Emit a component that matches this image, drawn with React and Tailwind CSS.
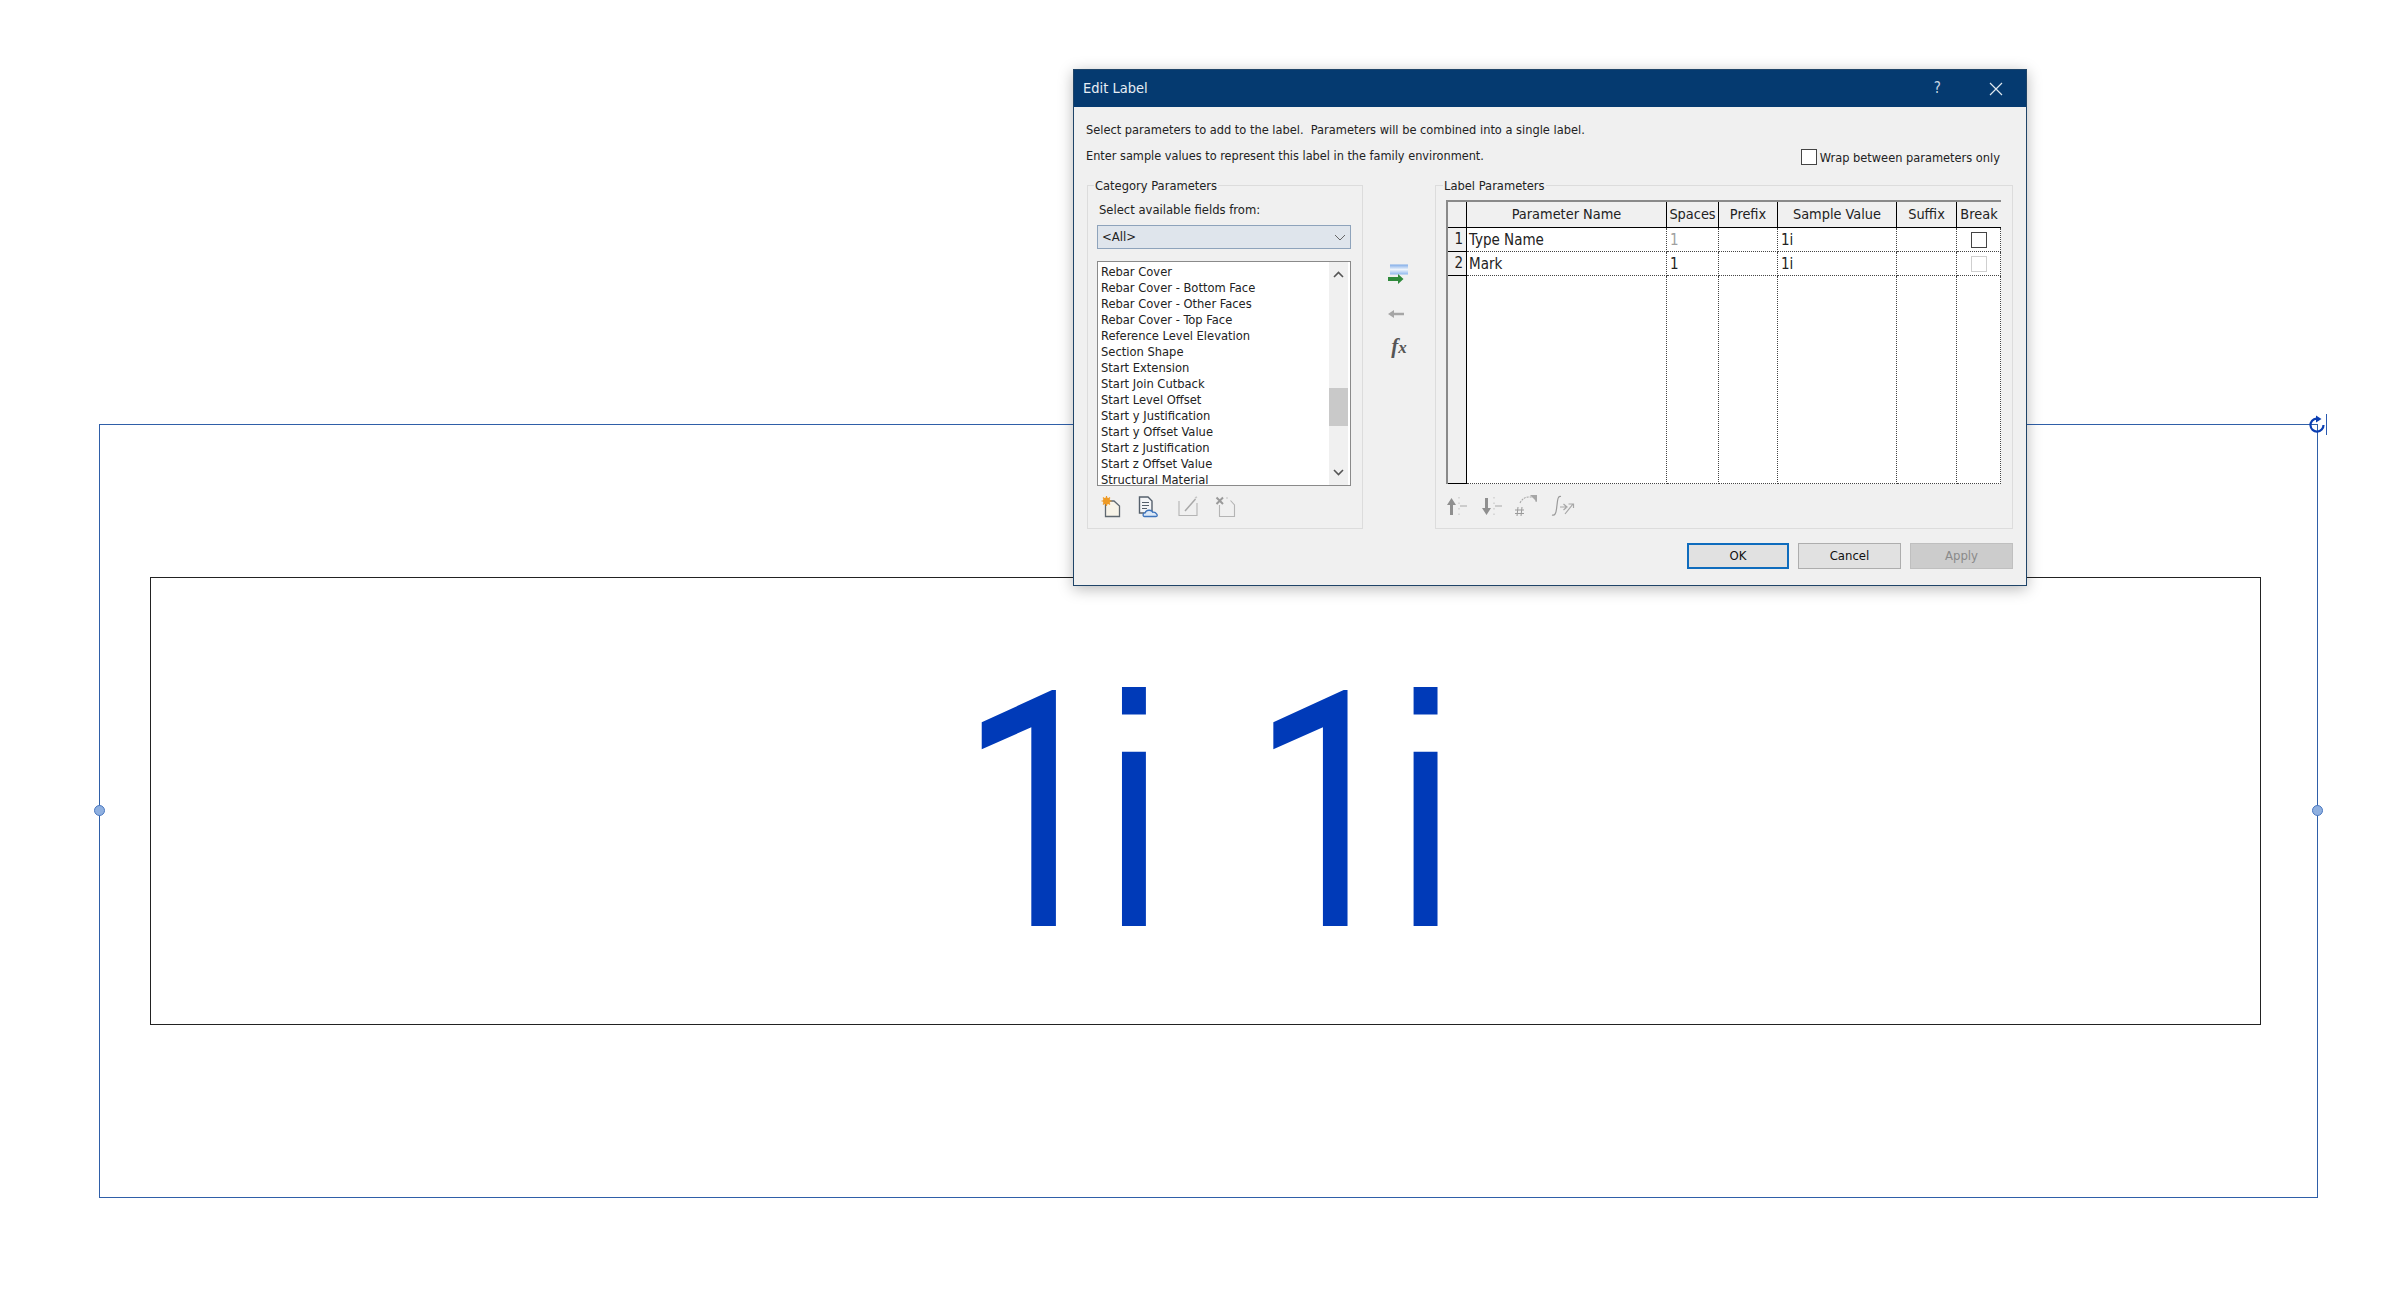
import React from "react";

const FONT = "font-['DejaVu_Sans_Condensed','Noto_Sans',sans-serif]";

const listItems = [
  "Rebar Cover",
  "Rebar Cover - Bottom Face",
  "Rebar Cover - Other Faces",
  "Rebar Cover - Top Face",
  "Reference Level Elevation",
  "Section Shape",
  "Start Extension",
  "Start Join Cutback",
  "Start Level Offset",
  "Start y Justification",
  "Start y Offset Value",
  "Start z Justification",
  "Start z Offset Value",
  "Structural Material",
];

const headers = ["", "Parameter Name", "Spaces", "Prefix", "Sample Value", "Suffix", "Break"];

function Handle() {
  return <div className="h-[11px] w-[11px] rounded-full border border-[#4a78c0] bg-[#8fb0e0]" />;
}

function RotateHandle() {
  return (
    <svg width="20" height="22" viewBox="0 0 20 22" fill="none">
      <path d="M9.5 4.6 A6.5 6.5 0 1 0 16.5 11" stroke="#0b3fb3" strokeWidth="2.2" />
      <path d="M9 1.5 L14.5 5 L9 8.5 Z" fill="#0b3fb3" />
    </svg>
  );
}

function NewIcon() {
  return (
    <svg width="22" height="22" viewBox="0 0 22 22" fill="none">
      <path d="M4.5 5 H13 L18.5 10 V20.5 H4.5 Z" fill="#f7f3e8" stroke="#5f6870" strokeWidth="1.3" />
      <circle cx="5.5" cy="5" r="3.6" fill="#ee9a25" />
      <path d="M5.5 0 V10 M0.5 5 H10.5 M2 1.5 L9 8.5 M9 1.5 L2 8.5" stroke="#ee9a25" strokeWidth="1.2" />
    </svg>
  );
}

function CloudDocIcon() {
  return (
    <svg width="22" height="22" viewBox="0 0 22 22" fill="none">
      <path d="M1.5 1 H10 L14 5 V17 H1.5 Z" fill="#f4f5f7" stroke="#55606c" strokeWidth="1.4" />
      <path d="M4 6.5 H11 M4 9.5 H11 M4 12.5 H9" stroke="#55606c" strokeWidth="1.2" />
      <path d="M6.5 20.5 C4.5 20.5 4.5 16.8 7.2 16.8 C8 13.8 13.5 13.2 14.8 16.3 C18 15.5 21 20.5 18 20.5 Z" fill="#dbe8f7" stroke="#3d74bd" strokeWidth="1.3" />
    </svg>
  );
}

function EditIcon() {
  return (
    <svg width="22" height="22" viewBox="0 0 22 22" fill="none">
      <path d="M2 5 V19.5 H20 V7" stroke="#b4b4b4" strokeWidth="1.1" />
      <path d="M8 15 L18.5 3" stroke="#a8a8a8" strokeWidth="1.5" />
      <path d="M18 2 L20 1" stroke="#c8c8c8" strokeWidth="1.5" />
    </svg>
  );
}

function DeleteIcon() {
  return (
    <svg width="22" height="22" viewBox="0 0 22 22" fill="none">
      <path d="M4.5 9 V20.5 H19.5 V9 L15.5 4.5" stroke="#b4b4b4" strokeWidth="1.1" />
      <path d="M1.5 1.5 L8 8 M8 1.5 L1.5 8" stroke="#9a9a9a" strokeWidth="2" />
      <path d="M11 2 H13" stroke="#c4c4c4" strokeWidth="1" />
    </svg>
  );
}

function AddParamIcon() {
  return (
    <svg width="22" height="20" viewBox="0 0 22 20" fill="none">
      <defs>
        <linearGradient id="bluebar" x1="0" y1="0" x2="0" y2="1">
          <stop offset="0" stopColor="#7fabe8" />
          <stop offset="0.5" stopColor="#eef4fc" />
          <stop offset="1" stopColor="#8fb8ee" />
        </linearGradient>
      </defs>
      <rect x="3" y="0.5" width="18" height="10" fill="url(#bluebar)" />
      <path d="M1 13 H11 V10 L16.5 15 L11 20 V17 H1 Z" fill="#2f8a3c" />
    </svg>
  );
}

function RemoveParamIcon() {
  return (
    <svg width="18" height="10" viewBox="0 0 18 10">
      <path d="M17 3.8 H7 V1 L1 5 L7 9 V6.2 H17 Z" fill="#a6a6a6" />
    </svg>
  );
}

function MoveIcon({ down }) {
  return (
    <svg width="22" height="22" viewBox="0 0 22 22" fill="none">
      {down ? (
        <path d="M4 3 H7 V13 H10 L5.5 20 L1 13 H4 Z" fill="#8f8f8f" />
      ) : (
        <path d="M4 20 H7 V10 H10 L5.5 3 L1 10 H4 Z" fill="#8f8f8f" />
      )}
      <path d="M13 2 V20" stroke="#c0c0c0" strokeWidth="1" strokeDasharray="1.5 4" />
      <path d="M14 11 H21" stroke="#a8a8a8" strokeWidth="1" />
    </svg>
  );
}

function NumberIcon() {
  return (
    <svg width="24" height="24" viewBox="0 0 24 24" fill="none">
      <path d="M4 13 L3 22 M8 13 L7 22 M1 16 H10 M1 19.5 H10" stroke="#9a9a9a" strokeWidth="1" />
      <path d="M6 9 C8 5 11 3 15 3 H22 V8" stroke="#a6a6a6" strokeWidth="1.1" strokeDasharray="2 1" />
      <path d="M16 1 H23 V8 Z" fill="#a6a6a6" />
    </svg>
  );
}

function FormulaMoveIcon() {
  return (
    <svg width="24" height="24" viewBox="0 0 24 24" fill="none">
      <path d="M1 21 C4 22 5 19 5.5 15 L6.5 7 C7 3 8 2 10 2.5" stroke="#9a9a9a" strokeWidth="1.2" />
      <path d="M9 13 H15 M12.5 10 L16 13 L12.5 16 M14 20 L22 10 M17.5 10 H22.5 V14" stroke="#a6a6a6" strokeWidth="1.2" />
    </svg>
  );
}

function Chevron({ up, className }) {
  return (
    <svg width="11" height="7" viewBox="0 0 11 7" fill="none" className={className}>
      <path d={up ? "M1 6 L5.5 1.5 L10 6" : "M1 1 L5.5 5.5 L10 1"} stroke="#555" strokeWidth="1.6" />
    </svg>
  );
}

function Group({ title, className, legendClass, children }) {
  return (
    <div className={`relative border border-[#dcdcdc] ${className}`}>
      <div className={`absolute -top-[9px] bg-[#f0f0f0] px-[1px] text-[12.8px] leading-[17px] text-[#222] ${legendClass}`}>{title}</div>
      {children}
    </div>
  );
}

function ParamTable() {
  const cols = [
    "w-[21px]",
    "w-[200px]",
    "w-[52px]",
    "w-[59px]",
    "w-[119px]",
    "w-[60px]",
    "w-[44px]",
  ];
  const data = [
    { n: "1", name: "Type Name", spaces: "1", faded: true, sample: "1i", strong: true },
    { n: "2", name: "Mark", spaces: "1", faded: false, sample: "1i", strong: false },
  ];
  const dataCell = "h-full border-r border-b border-dotted border-[#444] bg-white text-[15px] leading-[24px] text-[#222] overflow-hidden";
  return (
    <div className="ml-[10px] mt-[14px] h-[284px] w-[555px] border-l-2 border-t-2 border-[#8a8a8a]">
      <div className="flex h-[26px]">
        {headers.map((h, i) => (
          <div key={i} className={`${i === 0 ? "w-[19px]" : cols[i]} shrink-0 flex items-center justify-center border-r border-b border-black text-[14.4px] text-[#222] ${i === 6 ? "border-r-0" : ""}`}>
            {h}
          </div>
        ))}
      </div>
      {data.map((r) => (
        <div key={r.n} className="flex h-[24px]">
          <div className="flex w-[19px] shrink-0 items-center justify-end border-r border-b border-black pr-[3px] text-[15px] text-[#222]">{r.n}</div>
          <div className={`${cols[1]} ${dataCell} pl-[2px]`}>{r.name}</div>
          <div className={`${cols[2]} ${dataCell} pl-[3px] ${r.faded ? "text-[#a0a0a0]" : ""}`}>{r.spaces}</div>
          <div className={`${cols[3]} ${dataCell}`} />
          <div className={`${cols[4]} ${dataCell} pl-[3px]`}>{r.sample}</div>
          <div className={`${cols[5]} ${dataCell}`} />
          <div className={`${cols[6]} ${dataCell} flex items-center justify-center`}>
            <div className={`h-[16px] w-[16px] border bg-white ${r.strong ? "border-[#444]" : "border-[#cfcfcf]"}`} />
          </div>
        </div>
      ))}
      <div className="flex h-[208px]">
        <div className="w-[19px] shrink-0 border-r border-b border-black" />
        {cols.slice(1).map((c, i) => (
          <div key={i} className={`${c} ${dataCell}`} />
        ))}
      </div>
    </div>
  );
}

function Dialog() {
  return (
    <div className={`absolute left-[1073px] top-[69px] flex h-[517px] w-[954px] flex-col border border-[#1f4468] bg-[#f0f0f0] shadow-[0_3px_14px_rgba(0,0,0,0.28)] ${FONT}`}>
      <div className="flex h-[37px] shrink-0 items-center bg-[#053a70] pl-[9px] text-[14.5px] text-[#e8eef5]">
        <span>Edit Label</span>
        <span className="ml-auto mr-[48px] text-[15px] text-[#c9d6e4]">?</span>
        <svg width="14" height="14" viewBox="0 0 14 14" className="mr-[23px]" fill="none">
          <path d="M1 1 L13 13 M13 1 L1 13" stroke="#dfe7ef" strokeWidth="1.2" />
        </svg>
      </div>

      <div className="flex items-end justify-between pl-[12px] pr-[26px] pt-[9px] text-[12.7px] text-[#222]">
        <div>
          <div className="h-[27px] leading-[27px]">Select parameters to add to the label.&nbsp; Parameters will be combined into a single label.</div>
          <div className="h-[27px] text-[12.6px] leading-[26px]">Enter sample values to represent this label in the family environment.</div>
        </div>
        <label className="flex items-center gap-[3px] pb-[3px]">
          <span className="h-[16px] w-[16px] border border-[#444] bg-white" />
          <span className="text-[12.7px]">Wrap between parameters only</span>
        </label>
      </div>

      <div className="mt-[15px] flex pl-[13px]">
        <Group title="Category Parameters" className="h-[344px] w-[276px]" legendClass="left-[6px]">
          <div className="pl-[9px]">
            <div className="pl-[2px] pt-[15px] text-[12.9px] leading-[18px] text-[#222]">Select available fields from:</div>
            <div className="mt-[6px] flex h-[24px] w-[254px] items-center justify-between border border-[#8ea3bb] bg-[#dfe5ec] pl-[4px] pr-[4px] text-[13px] text-[#222]">
              <span>&lt;All&gt;</span>
              <svg width="12" height="7" viewBox="0 0 12 7" fill="none"><path d="M1 1 L6 6 L11 1" stroke="#666" strokeWidth="1" /></svg>
            </div>
            <div className="mt-[12px] flex h-[225px] w-[254px] overflow-hidden border border-[#8a8a8a] bg-white">
              <div className="min-w-0 flex-1 pl-[3px] pt-[2px] text-[12.8px] leading-[16px] text-[#222]">
                {listItems.map((t) => (
                  <div key={t} className="h-[16px] whitespace-nowrap">{t}</div>
                ))}
              </div>
              <div className="relative mr-[2px] w-[19px] bg-[#f0f0f0]">
                <Chevron up className="absolute left-[4px] top-[9px]" />
                <div className="absolute left-0 top-[126px] h-[38px] w-full bg-[#c9c9c9]" />
                <Chevron className="absolute bottom-[9px] left-[4px]" />
              </div>
            </div>
            <div className="mt-[10px] flex items-center pl-[4px]">
              <NewIcon />
              <span className="w-[15px]" />
              <CloudDocIcon />
              <span className="w-[17px]" />
              <EditIcon />
              <span className="w-[16px]" />
              <DeleteIcon />
            </div>
          </div>
        </Group>

        <div className="flex w-[72px] flex-col items-center pt-[79px]">
          <div className="-ml-[2px]"><AddParamIcon /></div>
          <div className="-ml-[7px] mt-[25px]"><RemoveParamIcon /></div>
          <div className="mt-[16px] font-['Liberation_Serif',serif] text-[21px] font-bold italic leading-[22px] text-[#555]">f<span className="text-[17px]">x</span></div>
        </div>

        <Group title="Label Parameters" className="h-[344px] w-[578px]" legendClass="left-[7px]">
          <ParamTable />
          <div className="ml-[5px] mt-[10px] flex items-center">
            <span className="ml-[5px]"><MoveIcon /></span>
            <span className="ml-[13px]"><MoveIcon down /></span>
            <span className="ml-[11px]"><NumberIcon /></span>
            <span className="ml-[13px]"><FormulaMoveIcon /></span>
          </div>
        </Group>
      </div>

      <div className="mt-[14px] flex justify-end gap-[9px] pr-[13px] text-[13px]">
        <button className="h-[26px] w-[102px] border-2 border-[#0f6cbd] bg-[#e1e1e1] text-[#111]">OK</button>
        <button className="h-[26px] w-[103px] border border-[#adadad] bg-[#e1e1e1] text-[#111]">Cancel</button>
        <button className="h-[26px] w-[103px] border border-[#bfbfbf] bg-[#cccccc] text-[#8a8a8a]">Apply</button>
      </div>
    </div>
  );
}

function BigOne() {
  return <span className="font-['Roboto',sans-serif] tracking-[-10px]">1</span>;
}

export default function App() {
  return (
    <div className="relative h-[1299px] w-full overflow-hidden bg-white pl-[99px] pt-[424px]">
      <div className="relative h-[774px] w-[2219px] border border-[#2f5fa8]">
        <div className="ml-[50px] mt-[152px] h-[448px] w-[2111px] overflow-hidden border border-[#222]">
          <div className="ml-[808px] mt-[44px] origin-top-left scale-x-[0.825] whitespace-pre font-['Liberation_Sans',sans-serif] text-[330px] leading-[380px] text-[#003ab8] [word-spacing:13px]">
            <BigOne />i <BigOne />i
          </div>
        </div>
        <div className="absolute -left-[6px] top-[380px]"><Handle /></div>
        <div className="absolute -right-[6px] top-[380px]"><Handle /></div>
        <div className="absolute -right-[10px] -top-[11px]"><RotateHandle /></div>
        <div className="absolute -right-[10px] -top-[11px] h-[21px] w-px bg-[#2a5ab0]" />
      </div>
      <Dialog />
    </div>
  );
}
